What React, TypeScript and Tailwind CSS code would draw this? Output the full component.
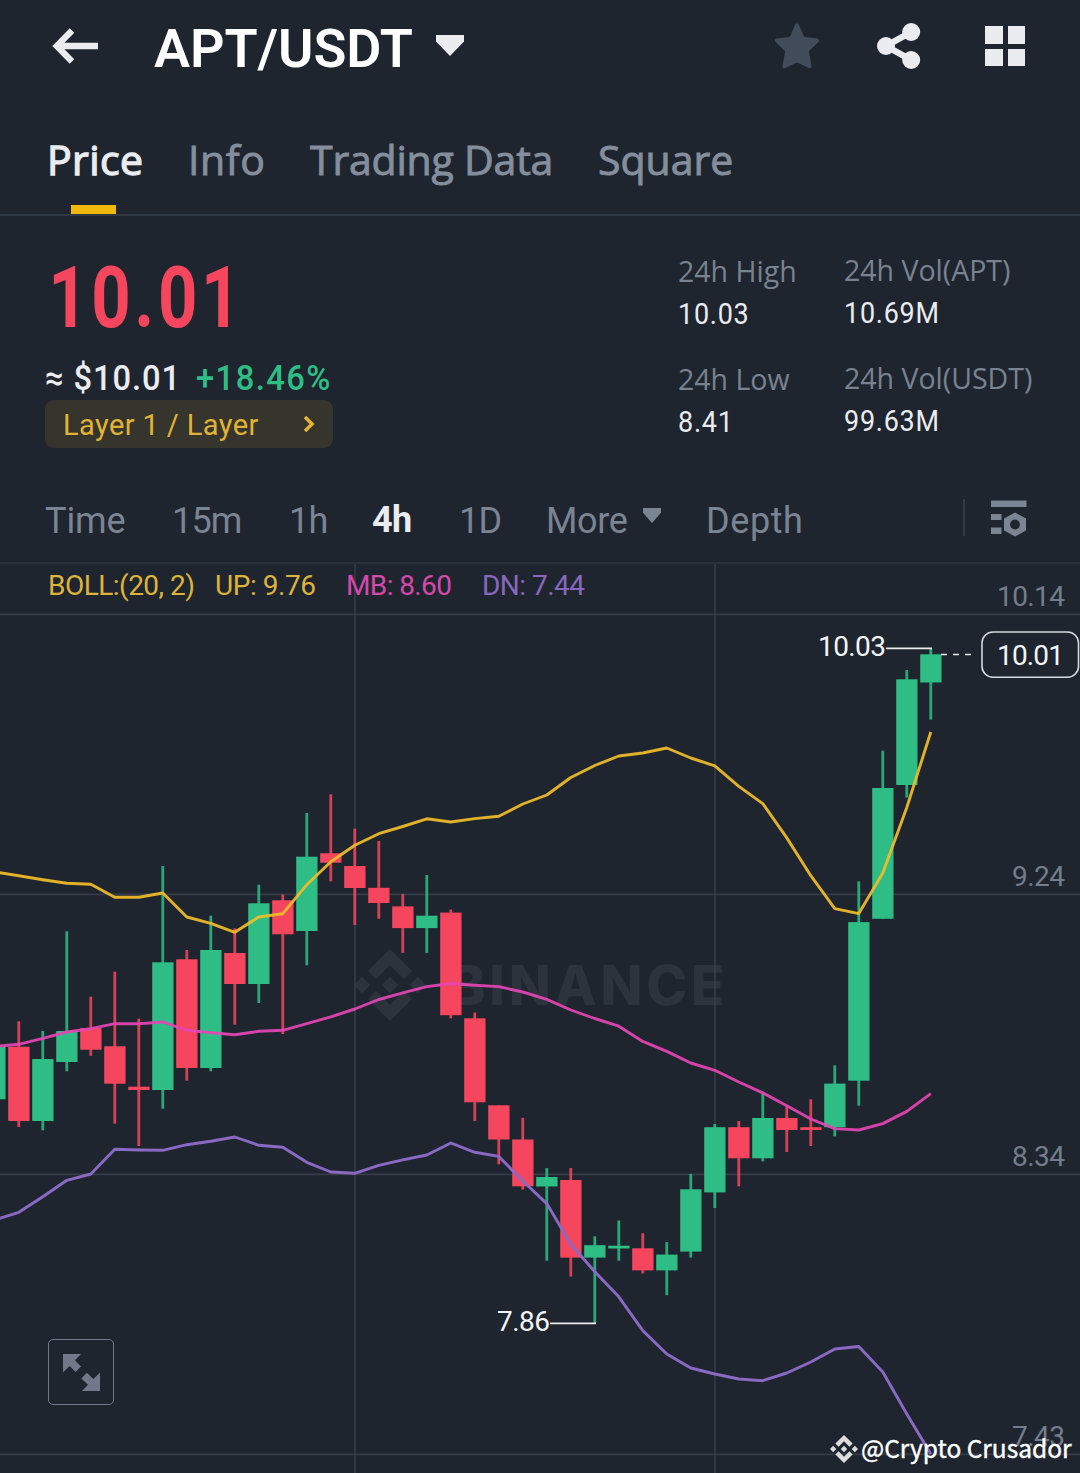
import type { ReactNode } from "react";

type Candle = [number, number, number, number, "g" | "r"];

const X0 = 18.8;
const STEP = 24;

// [high, body top, body bottom, low, colour] in chart pixels, first entry sits one step left of X0
const candles: Candle[] = [
  [1046.7, 1046.7, 1099.3, 1099.3, "g"],
  [1021.3, 1046.7, 1121, 1127, "r"],
  [1031, 1059, 1121, 1130.3, "g"],
  [931.3, 1031, 1062, 1071.3, "g"],
  [996.7, 1028, 1049.7, 1055.7, "r"],
  [971.7, 1046.3, 1083.7, 1123.7, "r"],
  [1018.7, 1086.7, 1090, 1146, "r"],
  [866, 962.3, 1090, 1108.7, "g"],
  [950, 959.3, 1068, 1080.7, "r"],
  [915.7, 950, 1068, 1071.3, "g"],
  [928.3, 953, 984, 1024.7, "r"],
  [884.7, 903.3, 984, 1003, "g"],
  [894.3, 900.3, 934.3, 1034, "r"],
  [813, 856.7, 931, 965.3, "g"],
  [794.3, 853.3, 862.7, 881.3, "r"],
  [828.7, 866, 888, 925, "r"],
  [841, 887.8, 903, 918.8, "r"],
  [894, 906.4, 928.1, 952.9, "r"],
  [875, 915.7, 928.1, 952.9, "g"],
  [909.5, 912.6, 1015.2, 1018.3, "r"],
  [1012.5, 1018.3, 1102.3, 1121, "r"],
  [1105.3, 1105.3, 1139.5, 1164.3, "r"],
  [1117.8, 1139.5, 1186.3, 1189.5, "r"],
  [1168.1, 1177, 1186.5, 1260.7, "g"],
  [1168, 1180, 1257.6, 1276.6, "r"],
  [1236.3, 1245.2, 1257.6, 1323, "g"],
  [1220.5, 1245.7, 1248.5, 1260.7, "g"],
  [1233.2, 1248.3, 1270.4, 1273.5, "r"],
  [1242.1, 1254.6, 1270.4, 1295.2, "g"],
  [1174, 1189.3, 1251.6, 1257.6, "g"],
  [1124, 1127.2, 1192.4, 1208, "g"],
  [1121, 1127.2, 1158.3, 1186.3, "r"],
  [1092.9, 1118, 1158.3, 1161.4, "g"],
  [1105.7, 1118, 1130, 1152, "r"],
  [1099.3, 1127.2, 1130, 1146, "r"],
  [1065.4, 1083.6, 1127.2, 1136.4, "g"],
  [881.4, 922.1, 1080.7, 1105.7, "g"],
  [750.7, 788, 918.8, 918.8, "g"],
  [670, 679.3, 785, 797.5, "g"],
  [648.6, 654.3, 682.5, 719.6, "g"],
];

const upper = [
  872, 875.7, 879.7, 883.3, 884.3, 897.3, 897.3, 893, 917, 923.3, 932.3, 917, 913.7, 884.7, 861.7, 845.2,
  833.7, 826.5, 818.8, 822, 818.6, 816.2, 804, 795, 777.5, 765.5, 756, 753, 748, 758, 765.9, 786.4, 803.6,
  837.9, 875.7, 908.6, 913.6, 872.9, 807.5, 732,
];
const middle = [
  1046.4, 1044.3, 1038.3, 1032, 1028.7, 1023.7, 1023.7, 1022, 1030.3, 1032.7, 1034.7, 1031.3, 1030.3, 1023.7,
  1016.9, 1009, 999.5, 992.8, 986.6, 983.5, 985.3, 986.6, 992, 999.4, 1010, 1018.5, 1026.2, 1041.4, 1051.4,
  1063, 1070.3, 1082, 1092.9, 1105.7, 1119, 1128.6, 1130, 1123.6, 1111.4, 1093.6,
];
const lower = [
  1220, 1212.3, 1196.7, 1180.3, 1174, 1149.3, 1150, 1150.3, 1144.7, 1141.3, 1137, 1145.3, 1147.3, 1162.3, 1172,
  1173.3, 1165.4, 1159.9, 1155, 1143, 1152.3, 1156.4, 1181, 1203.6, 1244.2, 1271.8, 1296.8, 1330.6, 1354, 1368,
  1374, 1379, 1380.7, 1373, 1362, 1349, 1346.5, 1372, 1414, 1454,
];

const toPoints = (ys: number[]) => ys.map((y, i) => `${X0 + (i - 1) * STEP},${y}`).join(" ");

function BinanceMark({ className }: { className: string }) {
  return (
    <svg viewBox="0 0 126.6 126.6" className={className} fill="currentColor">
      <path d="M38.7 53.2 63.3 28.6 87.9 53.2 102.2 38.9 63.3 0 24.4 38.9Z" />
      <path d="M0 63.3 14.3 49 28.6 63.3 14.3 77.6Z" />
      <path d="M38.7 73.4 63.3 98 87.9 73.4 102.2 87.7 63.3 126.6 24.4 87.7Z" />
      <path d="M98 63.3 112.3 49 126.6 63.3 112.3 77.6Z" />
      <path d="M77.8 63.3 63.3 48.8 48.8 63.3 63.3 77.8Z" />
    </svg>
  );
}

function Caret({ className }: { className: string }) {
  return (
    <svg viewBox="0 0 28 21" preserveAspectRatio="none" className={className} fill="currentColor">
      <path d="M0 0H28V6.5L14 21 0 6.5Z" />
    </svg>
  );
}

function Header() {
  return (
    <header className="flex h-[92px] items-center pl-[52px] pr-[54px]">
      <svg viewBox="0 0 46 36" className="h-[36px] w-[46px] text-[#eaecef]" fill="none" stroke="currentColor" strokeWidth="6.4">
        <path d="M46 18H5M20 2.5 4.8 18 20 33.5" />
      </svg>
      <h1 className="ml-[56px] w-[282px] whitespace-nowrap pt-[5px] font-['Roboto'] text-[54px] font-semibold leading-none tracking-[-0.1px] text-white">
        APT/USDT
      </h1>
      <Caret className="mb-[1px] h-[21px] w-[28px] text-[#eaecef]" />
      <svg viewBox="0 0 46 48" className="ml-[310px] h-[48px] w-[46px] text-[#434c5a]" fill="currentColor" stroke="currentColor" strokeWidth="4" strokeLinejoin="round">
        <path d="M23 3.5 28.8 16.7 43 18.5 32.6 28.5 35.6 44.3 23 38.1 10.4 44.3 13.4 28.5 3 18.5 17.2 16.7Z" />
      </svg>
      <svg viewBox="0 0 44 48" className="ml-[57px] h-[48px] w-[44px] text-[#eaecef]" fill="currentColor">
        <path d="M34.2 10 9 24 34.2 38" fill="none" stroke="currentColor" strokeWidth="6.4" />
        <circle cx="34.2" cy="10" r="9" />
        <circle cx="9" cy="24" r="9" />
        <circle cx="34.2" cy="38" r="9" />
      </svg>
      <div className="ml-[64px] grid size-[40px] shrink-0 grid-cols-2 gap-[5px]">
        <i className="bg-[#eaecef]" />
        <i className="bg-[#eaecef]" />
        <i className="bg-[#eaecef]" />
        <i className="bg-[#eaecef]" />
      </div>
    </header>
  );
}

function Tab({ className, active, children }: { className: string; active?: boolean; children: ReactNode }) {
  return (
    <div className={`flex h-full flex-col whitespace-nowrap ${className} ${active ? "text-[#eaecef]" : "text-[#848e9c]"}`}>
      <span className="mt-[39px] leading-[56px]">{children}</span>
      {active && <span className="ml-[24px] mt-auto h-[9px] w-[45px] bg-[#f0b90b]" />}
    </div>
  );
}

function Tabs() {
  return (
    <nav className="flex h-[124px] border-b-2 border-[#2f3743] pl-[47px] font-['Open_Sans'] text-[41px]">
      <Tab active className="w-[141px] tracking-[0.4px] [-webkit-text-stroke:1.3px_#eaecef]">Price</Tab>
      <Tab className="w-[122px] tracking-[0.6px] [-webkit-text-stroke:0.9px_#848e9c]">Info</Tab>
      <Tab className="w-[288px] tracking-[-0.2px] [-webkit-text-stroke:0.9px_#848e9c]">Trading Data</Tab>
      <Tab className="tracking-[0px] [-webkit-text-stroke:0.9px_#848e9c]">Square</Tab>
    </nav>
  );
}

function Stat({ label, value }: { label: string; value: string }) {
  return (
    <div className="whitespace-nowrap">
      <div className="font-['Open_Sans'] text-[28.5px] leading-[40px] text-[#79828f]">{label}</div>
      <div className="w-fit origin-left scale-x-[0.93] pt-[2px] font-['Roboto'] text-[29px] leading-[42px] tracking-[0.8px] text-[#eaecef]">{value}</div>
    </div>
  );
}

function Summary() {
  return (
    <section className="flex h-[262px] pl-[45px]">
      <div className="w-[633px] whitespace-nowrap pt-[38px] font-['Roboto']">
        <div className="w-fit origin-left scale-x-[0.8] pl-[4px] text-[86px] font-bold leading-[88px] tracking-[4.5px] text-[#f6465d]">10.01</div>
        <div className="mt-[12px] flex text-[35.5px] font-medium leading-[48px]">
          <span className="w-[151px] shrink-0">
            <span className="block w-fit origin-left scale-x-[0.92] tracking-[1px] text-[#eaecef]">≈ $10.01</span>
          </span>
          <span className="origin-left scale-x-[0.92] tracking-[1.6px] text-[#2ebd85]">+18.46%</span>
        </div>
        <div className="-mt-[2px] flex h-[48px] w-[288px] items-center justify-between rounded-[9px] bg-[#35342d] px-[18px] text-[29px] tracking-[0.4px] text-[#e0b334]">
          <span className="pt-[3px]">Layer 1 / Layer</span>
          <svg viewBox="0 0 12 18" className="h-[18px] w-[12px]" fill="none" stroke="currentColor" strokeWidth="3.6">
            <path d="M2 2 9 9 2 16" />
          </svg>
        </div>
      </div>
      <div className="flex w-[166px] flex-col gap-[24px] pt-[35px]">
        <Stat label="24h High" value="10.03" />
        <Stat label="24h Low" value="8.41" />
      </div>
      <div className="flex flex-col gap-[24px] pt-[34px]">
        <Stat label="24h Vol(APT)" value="10.69M" />
        <Stat label="24h Vol(USDT)" value="99.63M" />
      </div>
    </section>
  );
}

function Intervals() {
  return (
    <nav className="flex h-[86px] items-center whitespace-nowrap border-b-2 border-[#2b323d] pl-[45px] font-['Roboto'] text-[36px] tracking-[-0.1px] text-[#7b8492]">
      <span className="w-[127px] pt-[2px]">Time</span>
      <span className="w-[117px] pt-[2px] tracking-[-0.8px]">15m</span>
      <span className="w-[83px] pt-[2px] tracking-[-0.8px]">1h</span>
      <span className="w-[87px] font-bold tracking-[-0.6px] text-[#eaecef]">4h</span>
      <span className="w-[87px] pt-[2px] tracking-[-0.8px]">1D</span>
      <span className="w-[97px] pt-[2px] tracking-[-0.4px]">More</span>
      <Caret className="mb-[10px] h-[15px] w-[18px] text-[#7b8492]" />
      <span className="ml-[45px] w-[257px] pt-[2px] tracking-[0.6px]">Depth</span>
      <i className="mb-[6px] h-[37px] w-[2px] bg-[#343b47]" />
      <svg viewBox="0 0 36 37" className="mb-[4px] ml-[26px] h-[37px] w-[36px]" fill="currentColor">
        <path d="M0 0.5H35.5V7H0ZM0 14H10.5V20H0ZM0 27.5H10.5V34H0Z" />
        <path fillRule="evenodd" d="M24 12.4 35 18.4V30.6L24 36.6 13 30.6V18.4ZM24 19.6A4.9 4.9 0 1 0 24 29.4 4.9 4.9 0 1 0 24 19.6Z" />
      </svg>
    </nav>
  );
}

function Chart() {
  return (
    <section className="relative h-[909px]">
      <div className="absolute left-[354px] top-[384px] flex items-center text-[#2d333d]">
        <BinanceMark className="h-[74px] w-[72px]" />
        <span className="ml-[23px] font-['Inter'] text-[55px] font-extrabold leading-none tracking-[3.7px]">BINANCE</span>
      </div>
      <svg viewBox="0 564 1080 909" className="absolute inset-0 h-[909px] w-[1080px]" fontFamily="Roboto" fontSize="28">
        <g stroke="#434b57" strokeOpacity="0.62" strokeWidth="1.6">
          <path d="M0 614.4H1080M0 894.4H1080M0 1174.4H1080M0 1454.4H1080M355 564V1473M715 564V1473" />
        </g>
        {candles.map(([high, top, bottom, low, tone], i) => {
          const x = X0 + (i - 1) * STEP;
          return (
            <g key={i} fill={tone === "g" ? "#2ebd85" : "#f6465d"}>
              <rect x={x - 1.4} y={high} width="2.8" height={low - high} opacity="0.85" />
              <rect x={x - 10.6} y={top} width="21.3" height={bottom - top} />
            </g>
          );
        })}
        <g fill="none" strokeWidth="2.9" strokeLinejoin="round">
          <polyline points={toPoints(upper)} stroke="#f0bc2a" strokeOpacity="0.93" />
          <polyline points={toPoints(middle)} stroke="#e545b5" strokeOpacity="0.92" />
          <polyline points={toPoints(lower)} stroke="#8a69c4" />
        </g>
        <g stroke="#eaecef" strokeWidth="1.6">
          <path d="M886 648.4H932M550 1323.4H596" />
          <path d="M941 654.5H972" strokeDasharray="6 6" />
        </g>
        <text x="48" y="595" fill="#ddb33a" textLength="147">BOLL:(20, 2)</text>
        <text x="215" y="595" fill="#ddb33a" textLength="101">UP: 9.76</text>
        <text x="346" y="595" fill="#d649aa" textLength="106">MB: 8.60</text>
        <text x="482" y="595" fill="#8868be" textLength="103">DN: 7.44</text>
        <g fill="#747d8b">
          <text x="997" y="606" textLength="68">10.14</text>
          <text x="1012" y="886" textLength="53">9.24</text>
          <text x="1012" y="1166" textLength="53">8.34</text>
          <text x="1012" y="1446" textLength="53">7.43</text>
        </g>
        <g fill="#f3f5f7">
          <text x="818" y="656" textLength="68">10.03</text>
          <text x="497" y="1331" textLength="53">7.86</text>
          <rect x="982" y="632" width="96.5" height="45.2" rx="11" fill="#1f252f" stroke="#d5d8de" strokeWidth="1.6" />
          <text x="997" y="665" textLength="67">10.01</text>
        </g>
      </svg>
      <button className="absolute left-[48px] top-[775px] flex size-[66px] items-center justify-center rounded-[5px] border-[1.5px] border-[#707889] text-[#707889]">
        <svg viewBox="0 0 37 37" className="size-[37px]" fill="currentColor">
          <path d="M0 0H18L12 6.2 18 12.4 12.6 18 6.6 12 0 18.5Z" />
          <path d="M37 37H19L25 30.8 18.4 24.4 23.8 18.8 30.4 25 37 18.5Z" />
        </svg>
      </button>
      <div className="absolute left-[830px] top-[866px] flex items-center whitespace-nowrap text-white">
        <BinanceMark className="size-[28px] text-[#dcdcdc]" />
        <span className="-mt-[2px] ml-[3px] font-['Noto_Sans_CJK_SC'] text-[24.5px] font-normal leading-[40px] [-webkit-text-stroke:0.4px_#ffffff]">@Crypto Crusador</span>
      </div>
    </section>
  );
}

export default function App() {
  return (
    <main className="h-[1473px] w-[1080px] overflow-hidden bg-[#1f252f]">
      <Header />
      <Tabs />
      <Summary />
      <Intervals />
      <Chart />
    </main>
  );
}
